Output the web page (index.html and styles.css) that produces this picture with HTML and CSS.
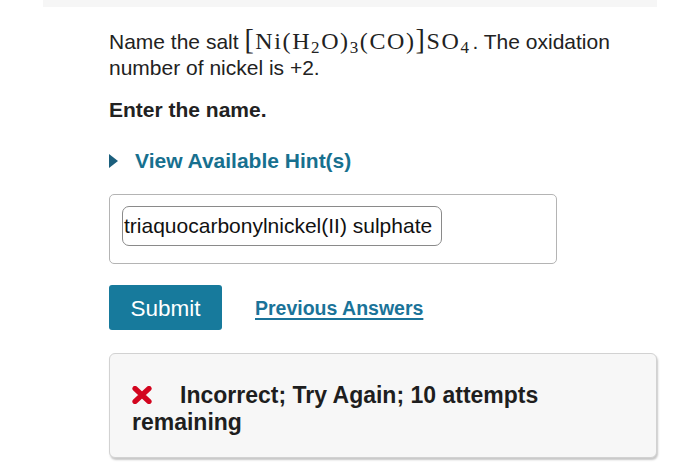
FILE: index.html
```html
<!DOCTYPE html>
<html>
<head>
<meta charset="utf-8">
<link rel="stylesheet" href="styles.css">
</head>
<body>
<div class="topbar"></div>
<main class="content">
  <p class="question"><span>Name the salt </span><span class="math"><span class="br">[</span>Ni(H<sub>2</sub>O)<sub>3</sub>(CO)<span class="br">]</span>SO<sub>4</sub></span><span>. The oxidation</span> <span>number of nickel is +2.</span></p>
  <p class="prompt">Enter the name.</p>
  <div class="hint">
    <svg class="tri" width="9" height="14" viewBox="0 0 9 14"><path d="M0 0 L9 7 L0 14 Z" fill="#1b5f7d"/></svg>
    <span>View Available Hint(s)</span>
  </div>
  <div class="answer-box">
    <div class="answer-input">triaquocarbonylnickel(II) sulphate</div>
  </div>
  <div class="actions">
    <button class="submit">Submit</button>
    <a class="prev">Previous Answers</a>
  </div>
  <div class="feedback">
    <p><svg class="x" width="20" height="18" viewBox="0 0 20 18"><path d="M3 2.5 L17 15.5 M17 2.5 L3 15.5" stroke="#d3051f" stroke-width="5.2" stroke-linecap="round" fill="none"/></svg><span class="fb-text">Incorrect; Try Again; 10 attempts remaining</span></p>
  </div>
</main>
</body>
</html>
```

FILE: styles.css
```css
html, body {
  margin: 0;
  padding: 0;
  background: #ffffff;
}
body {
  font-family: "Liberation Sans", Arial, sans-serif;
  color: #222;
  width: 700px;
  height: 469px;
  overflow: hidden;
}
.topbar {
  margin-left: 43px;
  width: 614px;
  height: 7px;
  background: #f6f6f6;
}
.content {
  padding-left: 109px;
  padding-top: 22px;
}
.question {
  margin: 0;
  width: 540px;
  font-size: 21px;
  line-height: 26px;
}
.math {
  font-family: "Liberation Serif", "Times New Roman", serif;
  font-size: 24px;
  letter-spacing: 1.6px;
  line-height: 20px;
  margin: 0 2px 0 0;
}
.math .br {
  font-size: 28px;
  display: inline-block;
  transform: scaleY(1.05);
}
.math sub {
  font-size: 17px;
  vertical-align: -4px;
  line-height: 0;
}
.prompt {
  margin: 16px 0 0;
  font-size: 21px;
  font-weight: bold;
  line-height: 26px;
}
.hint {
  margin-top: 25px;
  display: flex;
  align-items: center;
  gap: 17px;
  color: #17708f;
  font-weight: bold;
  font-size: 21px;
  line-height: 26px;
}
.tri {
  display: block;
}
.answer-box {
  margin-top: 20px;
  width: 422px;
  height: 44px;
  border: 1px solid #b4b4b4;
  border-radius: 5px;
  padding: 11px 12px 13px;
}
.answer-input {
  box-sizing: border-box;
  width: 320px;
  height: 40px;
  border: 1px solid #8a8a8a;
  border-radius: 7px;
  font-size: 21px;
  line-height: 38px;
  color: #111;
  padding-left: 1px;
  white-space: nowrap;
}
.actions {
  margin-top: 21px;
  display: flex;
  align-items: center;
  gap: 33px;
}
.submit {
  width: 113px;
  height: 45px;
  border: none;
  border-radius: 3px;
  background: #177a9c;
  color: #fff;
  font-family: "Liberation Sans", Arial, sans-serif;
  font-size: 22.5px;
  padding: 3px 0 0;
}
.prev {
  color: #1a7399;
  font-weight: bold;
  font-size: 19.5px;
  text-decoration: underline;
  text-decoration-thickness: 2px;
  text-underline-offset: 3px;
  margin-top: 1px;
}
.feedback {
  margin-top: 23px;
  width: 548px;
  height: 105px;
  background: #f7f7f7;
  border: 1px solid #d2d2d2;
  border-radius: 6px;
  box-shadow: 1px 2px 2px rgba(0,0,0,0.22);
  box-sizing: border-box;
  padding: 28px 100px 0 22px;
}
.feedback p {
  margin: 0;
  font-size: 23px;
  font-weight: bold;
  line-height: 27px;
  color: #1e1e1e;
}
.x {
  vertical-align: -1px;
  margin-right: 28px;
}
```
